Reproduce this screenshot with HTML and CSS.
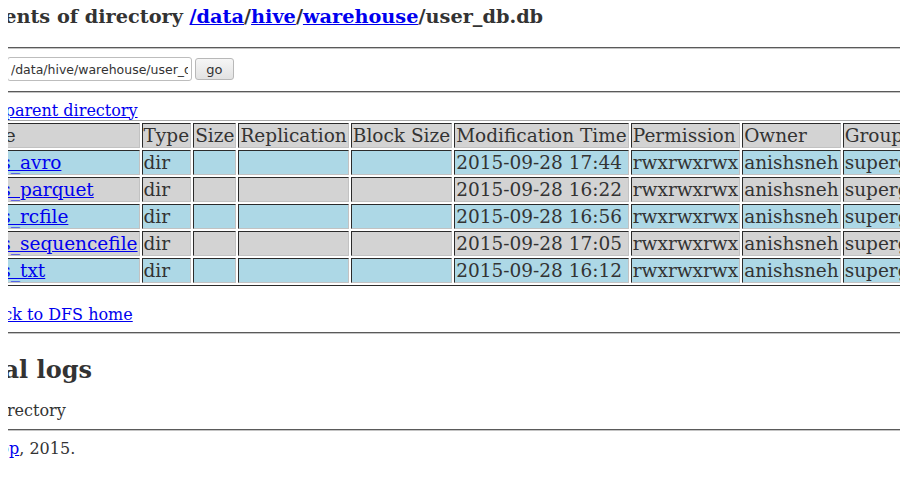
FILE: index.html
```
<!DOCTYPE html>
<html lang="en">
<head>
    <meta charset="UTF-8">
    <title>HDFS:/data/hive/warehouse/user_db.db</title>
    <link rel="stylesheet" href="styles.css">
</head>
<body>

    <div class="page">
        <!-- Title -->
        <h1 class="title">Contents of directory <a href="#">/data</a>/<a href="#">hive</a>/<a href="#">warehouse</a>/user_db.db</h1>

        <hr class="rule-top">

        <!-- Goto form -->
        <form class="goto" action="#" method="get">
            <span class="goto-label">Goto :</span><input class="dir-input" name="dir" type="text" value="/data/hive/warehouse/user_db.db"><button class="go-btn" type="submit">go</button>
        </form>

        <hr class="rule-form">

        <a class="parent-link" href="#">Go to parent directory</a>

        <!-- Directory listing -->
        <table class="listing">
            <tr class="header-row">
                <td>Name</td><td>Type</td><td>Size</td><td>Replication</td><td>Block Size</td><td>Modification Time</td><td>Permission</td><td>Owner</td><td>Group</td>
            </tr>
            <tr class="row-normal">
                <td><a href="#">users_avro</a></td><td>dir</td><td></td><td></td><td></td><td>2015-09-28 17:44</td><td>rwxrwxrwx</td><td>anishsneh</td><td>supergroup</td>
            </tr>
            <tr class="row-alt">
                <td><a href="#">users_parquet</a></td><td>dir</td><td></td><td></td><td></td><td>2015-09-28 16:22</td><td>rwxrwxrwx</td><td>anishsneh</td><td>supergroup</td>
            </tr>
            <tr class="row-normal">
                <td><a href="#">users_rcfile</a></td><td>dir</td><td></td><td></td><td></td><td>2015-09-28 16:56</td><td>rwxrwxrwx</td><td>anishsneh</td><td>supergroup</td>
            </tr>
            <tr class="row-alt">
                <td><a href="#">users_sequencefile</a></td><td>dir</td><td></td><td></td><td></td><td>2015-09-28 17:05</td><td>rwxrwxrwx</td><td>anishsneh</td><td>supergroup</td>
            </tr>
            <tr class="row-normal">
                <td><a href="#">users_txt</a></td><td>dir</td><td></td><td></td><td></td><td>2015-09-28 16:12</td><td>rwxrwxrwx</td><td>anishsneh</td><td>supergroup</td>
            </tr>
        </table>

        <a class="home-link" href="#">Go back to DFS home</a>

        <hr class="rule-home">

        <!-- Logs -->
        <h2 class="logs-title">Local logs</h2>
        <div class="logs"><a href="#">Log</a> directory</div>

        <hr class="rule-logs">

        <div class="footer"><a href="#">Hadoop</a>, 2015.</div>
    </div>

</body>
</html>
```

FILE: styles.css
```
/* Base */
html, body {
    overflow: hidden;
}

body {
    margin: 5px 8px 8px;
    background-color: #ffffff;
    color: #333333;
    font-family: 'DejaVu Serif', serif;
    font-size: 16px;
}

/* page is scrolled a little to the right */
.page {
    margin-left: -52px;
    width: 1000px;
}

a {
    color: #0000ee;
}

hr {
    border: none;
    border-top: 1px solid #5a5a5a;
    border-bottom: 1px solid #c4c4c4;
    margin: 8px 0;
}

/* Title */
.title {
    font-size: 19.3px;
    margin: 0 0 18.5px -3px;
}

.rule-top {
    margin-top: 0;
}

/* Goto form */
.goto {
    display: flex;
    align-items: center;
    height: 25px;
    margin: 0 0 9px;
}

.goto-label {
    margin-right: 2px;
}

.dir-input {
    width: 185px;
    height: 24px;
    box-sizing: border-box;
    padding: 2px 3px;
    border: 1px solid #bdbdbd;
    border-radius: 3px;
    font-family: 'DejaVu Sans', sans-serif;
    font-size: 12.5px;
    color: #333;
}

.go-btn {
    width: 39px;
    height: 22px;
    margin-left: 3px;
    padding: 0;
    border: 1px solid #b8b8b8;
    border-radius: 3px;
    background: linear-gradient(#f6f6f6, #e2e2e2);
    font-family: 'DejaVu Sans', sans-serif;
    font-size: 13px;
    color: #333;
}

.rule-form {
    margin-top: 0;
    margin-bottom: 8px;
}

.parent-link {
    display: block;
}

/* Listing table */
.listing {
    border-spacing: 2px;
    border: 1px solid;
    border-color: #a8a8a8 #2b2b2b #2b2b2b #a8a8a8;
    margin: 0 0 19px -1px;
    font-size: 18.5px;
}

.listing td {
    padding: 1px;
    border: 1px solid;
    border-color: #2b2b2b #c2c2c2 #c2c2c2 #2b2b2b;
    white-space: nowrap;
}

.header-row td {
    background-color: #d3d3d3;
}

.row-normal td {
    background-color: #add8e6;
}

.row-alt td {
    background-color: #d3d3d3;
}

.home-link {
    display: block;
}

.rule-home {
    margin-top: 8px;
    margin-bottom: 0;
}

/* Logs */
.logs-title {
    font-size: 24px;
    margin: 21px 0 17.7px;
}

.rule-logs {
    margin-top: 9.3px;
    margin-bottom: 0;
}

.footer {
    margin-top: 8px;
}
```
